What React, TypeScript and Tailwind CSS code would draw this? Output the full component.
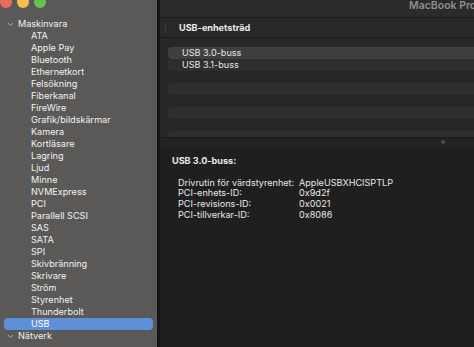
import { ChevronDown } from "lucide-react";

const maskinvara = [
  "ATA",
  "Apple Pay",
  "Bluetooth",
  "Ethernetkort",
  "Felsökning",
  "Fiberkanal",
  "FireWire",
  "Grafik/bildskärmar",
  "Kamera",
  "Kortläsare",
  "Lagring",
  "Ljud",
  "Minne",
  "NVMExpress",
  "PCI",
  "Parallell SCSI",
  "SAS",
  "SATA",
  "SPI",
  "Skivbränning",
  "Skrivare",
  "Ström",
  "Styrenhet",
  "Thunderbolt",
  "USB",
] as const;

const detaljer = [
  ["Drivrutin för värdstyrenhet:", "AppleUSBXHCISPTLP"],
  ["PCI-enhets-ID:", "0x9d2f"],
  ["PCI-revisions-ID:", "0x0021"],
  ["PCI-tillverkar-ID:", "0x8086"],
] as const;

// rader i trädlistan, första är vald
const rader = ["USB 3.0-buss", "USB 3.1-buss", "", "", "", "", "", ""];

export default function App() {
  return (
    <div className="flex h-[347px] w-[474px] overflow-hidden bg-[#1f1f1f] font-['Inter',sans-serif] text-[9.1px] antialiased">
      {/* Sidofält */}
      <aside className="relative w-[157px] shrink-0 bg-[#5a5958] text-[#f2f2f2]">
        <div className="absolute -top-[4px] left-0 flex gap-[5px]">
          <span className="h-[12px] w-[12px] rounded-full bg-[#ec6a5e]" />
          <span className="h-[12px] w-[12px] rounded-full bg-[#f4bf4f]" />
          <span className="h-[12px] w-[12px] rounded-full bg-[#61c554]" />
        </div>
        <ul className="pt-[18px] leading-[12px]">
          <li className="flex items-center gap-[3px] pl-[6px]">
            <ChevronDown className="h-[9px] w-[9px] text-[#cfcfcf]" strokeWidth={2} aria-hidden />
            <span>Maskinvara</span>
          </li>
          {maskinvara.map((namn) => (
            <li
              key={namn}
              className={
                namn === "USB"
                  ? "mx-[4px] rounded-[4px] bg-[#5e8fd9] pl-[27px] text-white"
                  : "pl-[31px]"
              }
            >
              {namn}
            </li>
          ))}
          <li className="flex items-center gap-[3px] pl-[6px]">
            <ChevronDown className="h-[9px] w-[9px] text-[#cfcfcf]" strokeWidth={2} aria-hidden />
            <span>Nätverk</span>
          </li>
        </ul>
      </aside>

      <div className="w-[3px] shrink-0 bg-[#141414]" />

      {/* Huvudyta */}
      <main className="flex min-w-0 flex-1 flex-col">
        <div className="h-[18px] shrink-0 overflow-hidden border-b border-[#1a1a1a] bg-[#2b2b2b] pl-[249px] leading-[11px]">
          <span className="whitespace-nowrap text-[10.5px] font-semibold text-[#8e8e8e]">
            MacBook Pro
          </span>
        </div>

        <div className="flex h-[20px] shrink-0 items-center border-b border-[#1c1c1c] bg-[#282828] pl-[5px]">
          <span className="h-[12px] w-px bg-[#3c3c3c]" />
          <span className="ml-[13px] font-bold text-[#ececec]">USB-enhetsträd</span>
        </div>

        <div className="flex h-[99px] shrink-0 flex-col overflow-hidden bg-[#272727] pl-[8px] pt-[9px] text-[#e6e6e6]">
          {rader.map((rad, i) => (
            <div
              key={i}
              className={`h-[12px] shrink-0 rounded-l-[4px] pl-[14px] leading-[12px] ${
                i === 0 ? "bg-[#3f3f3f]" : i % 2 === 1 ? "bg-[#2e2e2e]" : ""
              }`}
            >
              {rad}
            </div>
          ))}
        </div>

        <div className="relative h-[10px] shrink-0 border-t border-[#1a1a1a] bg-[#232323]">
          <span className="absolute left-[281px] top-[2px] h-[4px] w-[4px] rounded-full bg-[#4a4a4a]" />
        </div>

        <section className="flex-1 bg-[#1f1f1f] pl-[12px] pt-[7px] text-[#e8e8e8]">
          <h2 className="font-bold">USB 3.0-buss:</h2>
          <dl className="mt-[10px] grid grid-cols-[121px_1fr] pl-[6px] leading-[10.7px]">
            {detaljer.map(([nyckel, varde]) => (
              <div key={nyckel} className="contents">
                <dt>{nyckel}</dt>
                <dd>{varde}</dd>
              </div>
            ))}
          </dl>
        </section>
      </main>
    </div>
  );
}
